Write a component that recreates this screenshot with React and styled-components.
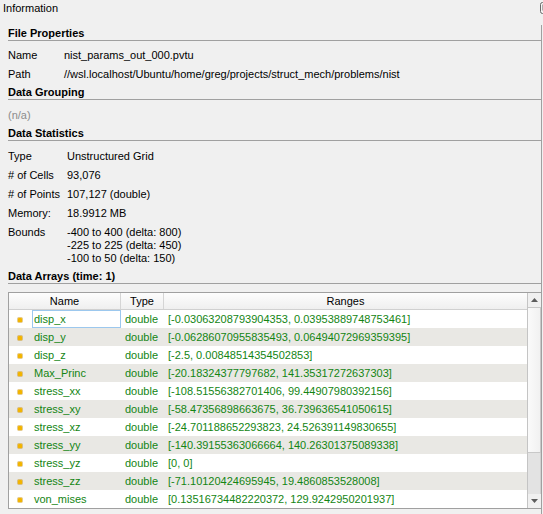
import { createGlobalStyle, styled } from "styled-components";

const GlobalStyle = createGlobalStyle`
	html, body {
		margin: 0;
		padding: 0;
		background: #f0f0f0;
	}
`;

const Panel = styled.div`
	width: 543px;
	height: 514px;
	background: #f0f0f0;
	display: flex;
	flex-direction: column;
	overflow: hidden;
	font-family: "Liberation Sans", Arial, sans-serif;
	font-size: 11px;
	color: #000;
`;

const TitleBar = styled.div`
	height: 17px;
	display: flex;
	align-items: center;
	justify-content: space-between;
	padding-left: 3px;
	line-height: 17px;
`;

const DockButton = styled.div`
	align-self: flex-start;
	margin-top: 2px;
	margin-right: -9px;
	width: 12px;
	height: 12px;
	svg {
		display: block;
	}
`;

const Body = styled.div`
	flex: 1;
	margin-top: 8px;
	margin-right: 1px;
	padding-left: 8px;
	border-right: 1px solid #a0a0a0;
	display: flex;
	flex-direction: column;
`;

const SectionHeading = styled.div`
	height: 15px;
	line-height: 16px;
	font-weight: bold;
	border-bottom: 1px solid #a0a0a0;
`;

const FormGrid = styled.div`
	display: grid;
	grid-template-columns: ${(p) => p.$labelWidth}px 1fr;
	margin-top: ${(p) => p.$gap}px;
	line-height: 13px;
	> div {
		padding: 3px 0;
	}
`;

const Muted = styled.div`
	margin-top: 6px;
	padding: 3px 0;
	line-height: 13px;
	color: #8c8c8c;
`;

const TableFrame = styled.div`
	margin-top: 8px;
	display: flex;
	border: 1px solid #a0a0a0;
	border-right: none;
	height: 215px;
`;

const TableView = styled.div`
	flex: 1;
	display: flex;
	flex-direction: column;
	background: #fff;
`;

const HeaderRow = styled.div`
	display: grid;
	grid-template-columns: 112px 43px 1fr;
	height: 16px;
	border-bottom: 1px solid #d0d0d0;
	background: linear-gradient(to bottom, #fdfdfd, #efefef);
`;

const HeaderCell = styled.div`
	text-align: center;
	line-height: 16px;
	border-right: ${(p) => (p.$last ? "none" : "1px solid #d5d5d5")};
`;

const Row = styled.div`
	display: grid;
	grid-template-columns: 112px 43px 1fr;
	height: 18px;
	line-height: 18px;
	color: #138513;
	background: ${(p) => (p.$alt ? "#e9e8e4" : "#fff")};
	white-space: nowrap;
`;

const NameCell = styled.div`
	display: flex;
	align-items: center;
`;

const ArrayIcon = styled.span`
	width: 23px;
	height: 100%;
	display: flex;
	align-items: center;
	padding-left: 9px;
	box-sizing: border-box;
	&::before {
		content: "";
		width: 4px;
		height: 4px;
		margin-top: 1px;
		border-radius: 0.5px;
		background: #f2b400;
		outline: 1px solid rgba(200, 140, 0, 0.45);
	}
`;

const NameText = styled.div`
	flex: 1;
	height: 100%;
	box-sizing: border-box;
	padding-left: ${(p) => (p.$focused ? 1 : 2)}px;
	line-height: ${(p) => (p.$focused ? 16 : 18)}px;
	border: ${(p) => (p.$focused ? "1px solid #9cc8ee" : "none")};
`;

const TextCell = styled.div`
	padding-left: ${(p) => p.$pad}px;
	overflow: hidden;
`;

const ScrollBar = styled.div`
	width: 13px;
	border-left: 1px solid #c4c4c4;
	display: flex;
	flex-direction: column;
	background: #e6e6e6;
`;

const ArrowButton = styled.div`
	height: 14px;
	background: #f0f0f0;
	display: flex;
	align-items: center;
	justify-content: center;
`;

const Thumb = styled.div`
	height: 146px;
	box-sizing: border-box;
	border: 1px solid #c8c8c8;
	border-left: none;
	background: linear-gradient(to right, #fafafa, #f1f1f1);
`;

const Track = styled.div`
	flex: 1;
	background: #e3e3e3;
	border-right: 1px solid #d0d0d0;
`;

const fileProps = [
	["Name", "nist_params_out_000.pvtu"],
	["Path", "//wsl.localhost/Ubuntu/home/greg/projects/struct_mech/problems/nist"],
];

const stats = [
	["Type", "Unstructured Grid"],
	["# of Cells", "93,076"],
	["# of Points", "107,127 (double)"],
	["Memory:", "18.9912 MB"],
	[
		"Bounds",
		"-400 to 400 (delta: 800)\n-225 to 225 (delta: 450)\n-100 to 50 (delta: 150)",
	],
];

const arrays = [
	["disp_x", "[-0.03063208793904353, 0.03953889748753461]"],
	["disp_y", "[-0.06286070955835493, 0.06494072969359395]"],
	["disp_z", "[-2.5, 0.00848514354502853]"],
	["Max_Princ", "[-20.18324377797682, 141.35317272637303]"],
	["stress_xx", "[-108.51556382701406, 99.44907980392156]"],
	["stress_xy", "[-58.47356898663675, 36.739636541050615]"],
	["stress_xz", "[-24.701188652293823, 24.526391149830655]"],
	["stress_yy", "[-140.39155363066664, 140.26301375089338]"],
	["stress_yz", "[0, 0]"],
	["stress_zz", "[-71.10120424695945, 19.4860853528008]"],
	["von_mises", "[0.13516734482220372, 129.9242950201937]"],
];

function Arrow({ down }) {
	return (
		<svg width="7" height="4" viewBox="0 0 7 4">
			<path
				d={down ? "M0 0 L7 0 L3.5 4 Z" : "M0 4 L7 4 L3.5 0 Z"}
				fill="#5c5c5c"
			/>
		</svg>
	);
}

function Form({ rows, labelWidth, gap }) {
	return (
		<FormGrid $labelWidth={labelWidth} $gap={gap}>
			{rows.map(([label, value]) => [
				<div key={label + "-l"}>{label}</div>,
				<div key={label + "-v"} style={{ whiteSpace: "pre" }}>
					{value}
				</div>,
			])}
		</FormGrid>
	);
}

export default function App() {
	return (
		<Panel>
			<GlobalStyle />
			<TitleBar>
				<span>Information</span>
				<DockButton>
					<svg width="12" height="12" viewBox="0 0 12 12">
						<rect x="0.5" y="0.5" width="11" height="11" rx="2" fill="#f4f4f4" stroke="#6a6a6a" />
						<rect x="3" y="3" width="5" height="5" fill="none" stroke="#6a6a6a" />
					</svg>
				</DockButton>
			</TitleBar>

			<Body>
				<SectionHeading>File Properties</SectionHeading>
				<Form rows={fileProps} labelWidth={56} gap={5} />

				<SectionHeading>Data Grouping</SectionHeading>
				<Muted>(n/a)</Muted>

				<SectionHeading>Data Statistics</SectionHeading>
				<Form rows={stats} labelWidth={59} gap={6} />

				<SectionHeading>Data Arrays (time: 1)</SectionHeading>
				<TableFrame>
					<TableView>
						<HeaderRow>
							<HeaderCell>Name</HeaderCell>
							<HeaderCell>Type</HeaderCell>
							<HeaderCell $last>Ranges</HeaderCell>
						</HeaderRow>
						{arrays.map(([name, range], i) => (
							<Row key={name} $alt={i % 2 === 1}>
								<NameCell>
									<ArrayIcon />
									<NameText $focused={i === 0}>{name}</NameText>
								</NameCell>
								<TextCell $pad={4}>double</TextCell>
								<TextCell $pad={4}>{range}</TextCell>
							</Row>
						))}
					</TableView>
					<ScrollBar>
						<ArrowButton>
							<Arrow />
						</ArrowButton>
						<Thumb />
						<Track />
						<ArrowButton>
							<Arrow down />
						</ArrowButton>
					</ScrollBar>
				</TableFrame>
			</Body>
		</Panel>
	);
}
